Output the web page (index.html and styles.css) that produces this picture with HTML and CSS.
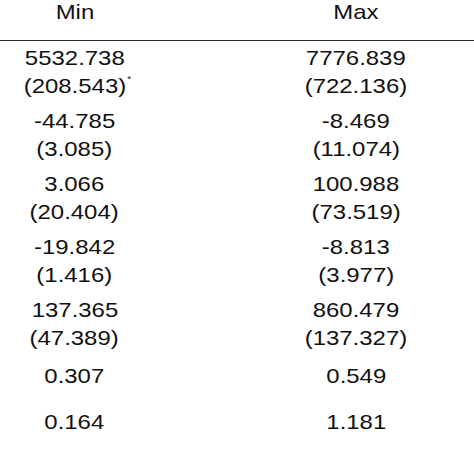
FILE: index.html
```html
<!DOCTYPE html>
<html>
<head>
<meta charset="utf-8">
<link rel="stylesheet" href="styles.css">
</head>
<body>
<div class="table">
  <div class="head">
    <div class="cell"><span class="t">Min</span></div>
    <div class="cell"><span class="t">Max</span></div>
  </div>
  <div class="row">
    <div class="cell"><span class="t">5532.738</span><span class="t">(208.543)<sup class="star">*</sup></span></div>
    <div class="cell"><span class="t">7776.839</span><span class="t">(722.136)</span></div>
  </div>
  <div class="row">
    <div class="cell"><span class="t">-44.785</span><span class="t">(3.085)</span></div>
    <div class="cell"><span class="t">-8.469</span><span class="t">(11.074)</span></div>
  </div>
  <div class="row">
    <div class="cell"><span class="t">3.066</span><span class="t">(20.404)</span></div>
    <div class="cell"><span class="t">100.988</span><span class="t">(73.519)</span></div>
  </div>
  <div class="row">
    <div class="cell"><span class="t">-19.842</span><span class="t">(1.416)</span></div>
    <div class="cell"><span class="t">-8.813</span><span class="t">(3.977)</span></div>
  </div>
  <div class="row">
    <div class="cell"><span class="t">137.365</span><span class="t">(47.389)</span></div>
    <div class="cell"><span class="t">860.479</span><span class="t">(137.327)</span></div>
  </div>
  <div class="row single">
    <div class="cell"><span class="t">0.307</span></div>
    <div class="cell"><span class="t">0.549</span></div>
  </div>
  <div class="row single">
    <div class="cell"><span class="t">0.164</span></div>
    <div class="cell"><span class="t">1.181</span></div>
  </div>
</div>
</body>
</html>
```
FILE: styles.css
```css
html, body {
  margin: 0;
  padding: 0;
  background: #ffffff;
}
body {
  font-family: "Liberation Sans", Arial, sans-serif;
  font-size: 21px;
  color: #111111;
}
.table {
  width: 474px;
}
.head, .row {
  display: grid;
  grid-template-columns: 149px 236px;
  justify-content: space-between;
}
.head {
  line-height: 23.5px;
  padding-bottom: 16px;
  border-bottom: 1.5px solid #2a2a2a;
}
.row {
  line-height: 28px;
  padding: 3.5px 0;
}
.row.single {
  padding: 6px 0 12px;
}
.cell {
  display: flex;
  flex-direction: column;
  align-items: center;
}
.t {
  display: inline-block;
  position: relative;
  transform: scaleX(1.14);
  white-space: nowrap;
}
.star {
  position: absolute;
  left: 100%;
  top: 3px;
  margin-left: 1px;
  font-size: 9px;
  line-height: 1;
}
```
